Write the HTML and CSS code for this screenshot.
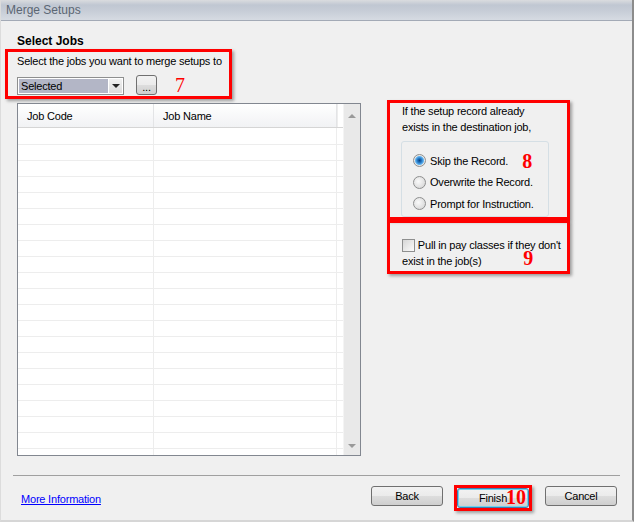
FILE: index.html
```html
<!DOCTYPE html>
<html lang="en">
<head>
    <meta charset="UTF-8">
    <title>Merge Setups</title>
    <link rel="stylesheet" href="styles.css">
</head>
<body>
    <div class="window">
        <div class="titlebar">Merge Setups</div>

        <div class="main">
            <div class="left">
                <h2 class="heading">Select Jobs</h2>
                <div class="mark mark-jobs">
                    <p class="hint">Select the jobs you want to merge setups to</p>
                    <div class="picker">
                        <div class="combo">
                            <span class="combo-value">Selected</span>
                            <span class="combo-arrow"></span>
                        </div>
                        <button class="btn btn-more">...</button>
                        <span class="num num-7">7</span>
                    </div>
                </div>

                <div class="grid">
                    <div class="grid-view">
                        <div class="grid-head">
                            <div class="col col-code">Job Code</div>
                            <div class="col col-name">Job Name</div>
                            <div class="col col-fill"></div>
                        </div>
                        <div class="grid-rows"></div>
                    </div>
                    <div class="scrollbar">
                        <span class="arrow arrow-up"></span>
                        <span class="arrow arrow-down"></span>
                    </div>
                </div>
            </div>

            <div class="right">
                <div class="mark mark-options">
                    <p class="text">If the setup record already<br>exists in the destination job,</p>
                    <div class="groupbox">
                        <label class="radio-row"><span class="radio checked"></span>Skip the Record.<span class="num num-8">8</span></label>
                        <label class="radio-row"><span class="radio"></span>Overwrite the Record.</label>
                        <label class="radio-row"><span class="radio"></span>Prompt for Instruction.</label>
                    </div>
                </div>
                <div class="mark mark-classes">
                    <p class="text"><span class="checkbox"></span> Pull in pay classes if they don't<br>exist in the job(s)<span class="num num-9">9</span></p>
                </div>
            </div>
        </div>

        <div class="separator"></div>

        <div class="footer">
            <a class="link" href="#">More Information</a>
            <div class="buttons">
                <button class="btn btn-nav">Back</button>
                <div class="mark mark-finish">
                    <button class="btn btn-nav btn-focus">Finish</button>
                    <span class="num num-10">10</span>
                </div>
                <button class="btn btn-nav">Cancel</button>
            </div>
        </div>
    </div>
</body>
</html>
```

FILE: styles.css
```css
body {
    margin: 0;
    font-family: "Liberation Sans", Arial, sans-serif;
    font-size: 11px;
    letter-spacing: -0.2px;
    color: #000;
}
.window {
    width: 634px;
    height: 522px;
    box-sizing: border-box;
    background-color: #f0f0f0;
    border-left: 1px solid #dcdcdc;
    border-right: 2px solid #8c8c8c;
    border-bottom: 2px solid #d6d6d6;
}
.titlebar {
    height: 20px;
    line-height: 20px;
    padding-left: 5px;
    font-size: 12px;
    letter-spacing: 0;
    color: #5b6673;
    border-bottom: 1px solid #a3aab6;
    background: linear-gradient(#dadcdf 0, #c0c7d2 25%, #c7cdd7 55%, #d6dbe2 100%);
}
.main {
    display: flex;
    align-items: flex-start;
    padding: 13px 0 0 4px;
}
.left {
    width: 356px;
}
.heading {
    margin: 0;
    padding-left: 12px;
    font-size: 12px;
    line-height: 14px;
    font-weight: bold;
    letter-spacing: 0;
}

/* red annotation boxes */
.mark {
    border: 3px solid #ff0000;
    box-shadow: 2px 2px 3px rgba(0, 0, 0, 0.35);
}
.num {
    font-family: "Liberation Serif", "Times New Roman", serif;
    font-size: 20px;
    font-weight: bold;
    line-height: 20px;
    letter-spacing: 0;
    color: #ff0000;
}

.mark-jobs {
    width: 212px;
    margin-top: 1px;
    padding: 3px 0 1px 9px;
}
.hint {
    margin: 0;
    line-height: 13px;
    white-space: nowrap;
}
.picker {
    display: flex;
    align-items: flex-end;
    margin-top: 7px;
}
.combo {
    display: flex;
    width: 107px;
    height: 18px;
    box-sizing: border-box;
    border: 1px solid #8e8f8f;
    background-color: #fff;
    padding: 1px;
    gap: 1px;
}
.combo-value {
    flex: 1;
    background-color: #b3b6c6;
    line-height: 14px;
    padding-left: 2px;
}
.combo-arrow {
    width: 13px;
    position: relative;
    background: linear-gradient(#f0f0f0, #dcdcdc);
}
.combo-arrow::after {
    content: "";
    position: absolute;
    left: 3px;
    top: 5px;
    border-left: 4px solid transparent;
    border-right: 4px solid transparent;
    border-top: 4px solid #222;
}
.btn {
    font-family: "Liberation Sans", Arial, sans-serif;
    font-size: 11px;
    letter-spacing: -0.2px;
    color: #000;
    border: 1px solid #707070;
    border-radius: 3px;
    background: linear-gradient(#f2f2f2 0%, #ebebeb 50%, #dddddd 51%, #cfcfcf 100%);
    padding: 0;
    cursor: pointer;
}
.btn-more {
    width: 21px;
    height: 20px;
    margin-left: 12px;
    line-height: 22px;
}
.num-7 {
    align-self: center;
    margin-left: 18px;
    font-weight: normal;
}

.grid {
    display: flex;
    width: 344px;
    height: 353px;
    box-sizing: border-box;
    margin: 4px 0 0 12px;
    border: 1px solid #828790;
    background-color: #fff;
}
.grid-view {
    flex: 1;
    display: flex;
    flex-direction: column;
}
.grid-head {
    display: flex;
    height: 24px;
    box-sizing: border-box;
    border-bottom: 1px solid #d5d5d5;
}
.col {
    line-height: 25px;
    box-sizing: border-box;
}
.col-code,
.col-name {
    padding-left: 9px;
    border-right: 1px solid #e3e4e6;
    background: linear-gradient(#ffffff, #f1f2f4);
}
.col-code {
    width: 136px;
}
.col-name {
    width: 183px;
}
.col-fill {
    flex: 1;
    border-left: 1px solid #ededed;
}
.grid-rows {
    flex: 1;
    background-image:
        linear-gradient(to right, transparent 135px, #ededed 135px, #ededed 136px, transparent 136px,
            transparent 318px, #ededed 318px, #ededed 319px, transparent 319px),
        repeating-linear-gradient(to bottom, transparent 0, transparent 15px, #ededed 15px, #ededed 16px);
    background-position: 0 0, 0 1px;
}
.scrollbar {
    width: 17px;
    display: flex;
    flex-direction: column;
    justify-content: space-between;
    align-items: center;
    padding: 10px 0 7px;
    box-sizing: border-box;
    background-color: #e9e9e9;
    border-left: 1px solid #f4f4f4;
}
.arrow {
    width: 0;
    height: 0;
    border-left: 4px solid transparent;
    border-right: 4px solid transparent;
}
.arrow-up {
    border-bottom: 4px solid #9a9a9a;
}
.arrow-down {
    border-top: 4px solid #9a9a9a;
}

.right {
    width: 183px;
    margin: 66px 0 0 26px;
}
.text {
    margin: 0;
    line-height: 16px;
}
.mark-options {
    padding-left: 12px;
}
.groupbox {
    width: 148px;
    height: 76px;
    box-sizing: border-box;
    margin: 6px 0 0 -1px;
    padding: 8px 0 0 11px;
    border: 1px solid #d5dfe5;
    border-radius: 3px;
}
.radio-row {
    display: flex;
    align-items: center;
    height: 21.5px;
}
.radio {
    width: 13px;
    height: 13px;
    box-sizing: border-box;
    margin-right: 4px;
    border: 1px solid #8e8f8f;
    border-radius: 50%;
    background: radial-gradient(circle at 40% 40%, #fafafa, #d0d0d0);
}
.radio.checked {
    background: radial-gradient(circle, #0b3f7a 0, #1f73c0 2px, #5fb2ef 4px, #e8e8e8 5px, #d0d0d0 100%);
}
.num-8 {
    margin-left: 14px;
}
.mark-classes {
    padding: 14px 0 2px 12px;
}
.checkbox {
    display: inline-block;
    width: 13px;
    height: 13px;
    box-sizing: border-box;
    vertical-align: -3px;
    border: 1px solid #8e8f8f;
    background: linear-gradient(135deg, #d6d6d6, #fbfbfb);
}
.num-9 {
    margin-left: 42px;
    line-height: 0;
}

.separator {
    height: 1px;
    width: 607px;
    margin: 19px 0 0 12px;
    background-color: #a0a0a0;
}
.footer {
    display: flex;
    justify-content: space-between;
    align-items: flex-start;
    padding: 9px 15px 0 20px;
}
.link {
    margin-top: 8px;
    color: #0000ff;
    line-height: 13px;
}
.buttons {
    display: flex;
    align-items: flex-start;
}
.btn-nav {
    width: 72px;
    height: 20px;
    margin-top: 1px;
}
.mark-finish {
    position: relative;
    margin: 0 13px 0 11px;
}
.mark-finish .btn-nav {
    display: block;
    margin-top: 0;
}
.btn-focus {
    border-color: #3c7fb1;
    box-shadow: inset 0 0 0 1px #6ed3ee;
}
.num-10 {
    position: absolute;
    left: 49px;
    top: -1px;
}
```
